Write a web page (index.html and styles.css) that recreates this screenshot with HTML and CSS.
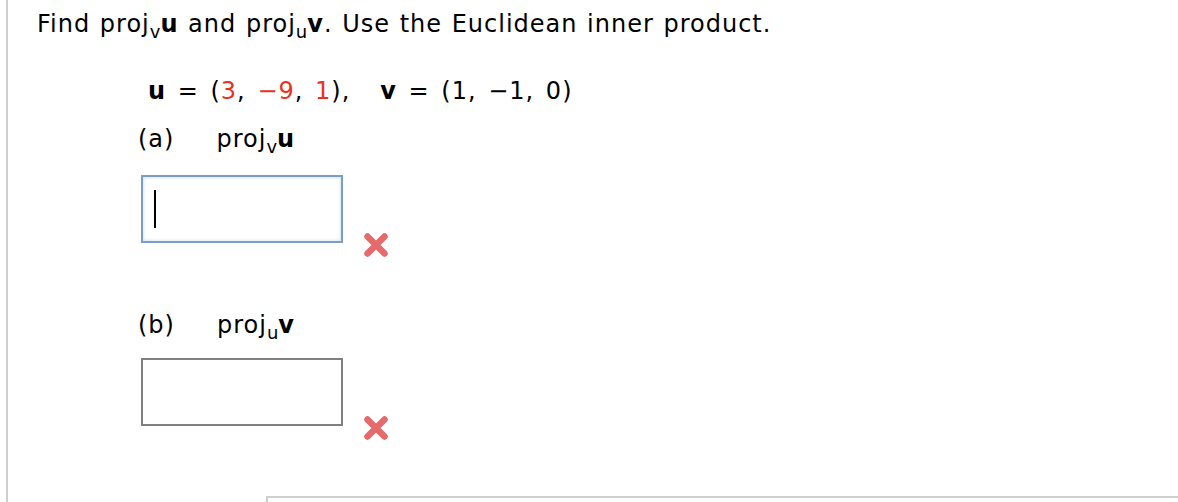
FILE: index.html
```html
<!DOCTYPE html>
<html>
<head>
<meta charset="utf-8">
<link rel="stylesheet" href="styles.css">
</head>
<body>
<div class="frame">
  <p class="question">Find proj<sub>v</sub><b>u</b> and proj<sub>u</sub><b>v</b>. Use the Euclidean inner product.</p>
  <p class="given"><b>u</b> = (<span class="red">3</span>, <span class="red">&minus;9</span>, <span class="red">1</span>),<span class="gap"></span><b>v</b> = (1, &minus;1, 0)</p>

  <div class="part">
    <div class="label"><span class="letter">(a)</span><span>proj<sub>v</sub><b>u</b></span></div>
    <div class="answer">
      <div class="box focused"><span class="caret"></span></div>
      <svg class="xmark" viewBox="0 0 26 26" width="26" height="26"><path d="M4.5 4.5 L21.5 21.5 M21.5 4.5 L4.5 21.5" stroke="#e4595b" stroke-width="6.5" stroke-linecap="round" opacity="0.9"/></svg>
    </div>
  </div>

  <div class="part partb">
    <div class="label"><span class="letter">(b)</span><span>proj<sub>u</sub><b>v</b></span></div>
    <div class="answer">
      <div class="box"></div>
      <svg class="xmark" viewBox="0 0 26 26" width="26" height="26"><path d="M4.5 4.5 L21.5 21.5 M21.5 4.5 L4.5 21.5" stroke="#e4595b" stroke-width="6.5" stroke-linecap="round" opacity="0.9"/></svg>
    </div>
  </div>
  <div class="footer-box"></div>
</div>
</body>
</html>
```

FILE: styles.css
```css
html, body {
  margin: 0;
  padding: 0;
  background: #fff;
}
body {
  font-family: "DejaVu Sans", Verdana, sans-serif;
  font-size: 24px;
  letter-spacing: 1px;
  word-spacing: 1px;
  color: #000;
}
.frame {
  margin-left: 6px;
  border-left: 2px solid #cfcfcf;
  height: 502px;
  box-sizing: border-box;
  padding-left: 29px;
  position: relative;
  overflow: hidden;
}
p { margin: 0; }
sub {
  font-size: 18px;
  vertical-align: -6px;
  line-height: 0;
  letter-spacing: 0;
}
b { font-weight: bold; }
.question {
  padding-top: 8px;
  line-height: 32px;
}
.given {
  margin-top: 35px;
  margin-left: 111px;
  line-height: 32px;
  word-spacing: 3px;
}
.red { color: #e8321d; }
.gap { display: inline-block; width: 30px; }
.part {
  margin-left: 101px;
}
.label {
  display: flex;
  gap: 42px;
  line-height: 32px;
  margin-top: 16px;
}
.answer {
  display: flex;
  align-items: flex-start;
  margin-left: 3px;
  margin-top: 20px;
}
.box {
  width: 198px;
  height: 64px;
  border: 2px solid #808080;
  box-sizing: content-box;
  background: #fff;
  position: relative;
}
.box.focused {
  border-color: #7b9dc7;
  box-shadow: inset 0 0 3px 1px #d9e6f8;
}
.caret {
  position: absolute;
  left: 11px;
  top: 13px;
  width: 2px;
  height: 38px;
  background: #000;
}
.xmark {
  margin-left: 20px;
  margin-top: 57px;
}
.partb .label { margin-top: 51px; }
.partb .answer { margin-top: 17px; }
.footer-box {
  position: absolute;
  left: 258px;
  top: 496px;
  width: 1000px;
  height: 20px;
  border-top: 2px solid #cfcfcf;
  border-left: 2px solid #cfcfcf;
}
```
